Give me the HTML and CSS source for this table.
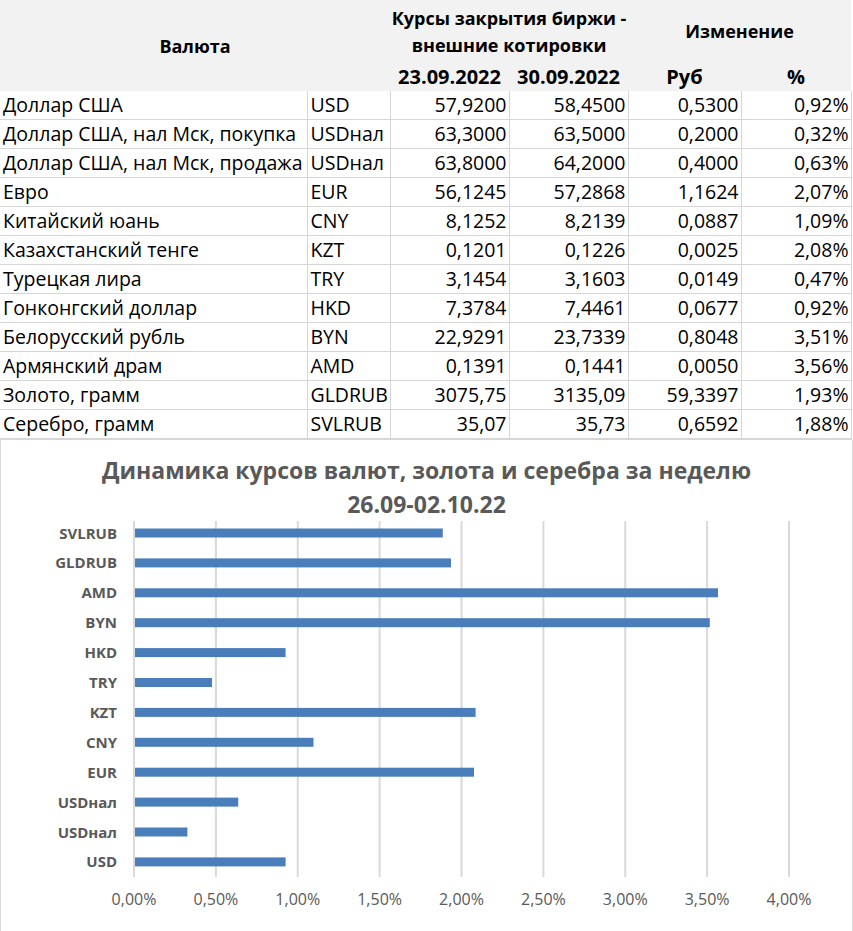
FILE: index.html
```html
<!DOCTYPE html>
<html lang="ru">
<head>
<meta charset="utf-8">
<title>Курсы валют</title>
<link rel="stylesheet" href="styles.css">
</head>
<body>
<table class="rates">
  <colgroup>
    <col class="c-name"><col class="c-code"><col class="c-num"><col class="c-num"><col class="c-rub"><col class="c-pct">
  </colgroup>
  <thead>
    <tr class="h-top">
      <th rowspan="2" colspan="2">Валюта</th>
      <th colspan="2" class="two-line">Курсы закрытия биржи -<br>внешние котировки</th>
      <th colspan="2">Изменение</th>
    </tr>
    <tr class="h-sub">
      <th>23.09.2022</th><th>30.09.2022</th><th>Руб</th><th>%</th>
    </tr>
  </thead>
  <tbody>
    <tr><td>Доллар США</td><td>USD</td><td class="n">57,9200</td><td class="n">58,4500</td><td class="n">0,5300</td><td class="n">0,92%</td></tr>
    <tr><td>Доллар США, нал Мск, покупка</td><td>USDнал</td><td class="n">63,3000</td><td class="n">63,5000</td><td class="n">0,2000</td><td class="n">0,32%</td></tr>
    <tr><td>Доллар США, нал Мск, продажа</td><td>USDнал</td><td class="n">63,8000</td><td class="n">64,2000</td><td class="n">0,4000</td><td class="n">0,63%</td></tr>
    <tr><td>Евро</td><td>EUR</td><td class="n">56,1245</td><td class="n">57,2868</td><td class="n">1,1624</td><td class="n">2,07%</td></tr>
    <tr><td>Китайский юань</td><td>CNY</td><td class="n">8,1252</td><td class="n">8,2139</td><td class="n">0,0887</td><td class="n">1,09%</td></tr>
    <tr><td>Казахстанский тенге</td><td>KZT</td><td class="n">0,1201</td><td class="n">0,1226</td><td class="n">0,0025</td><td class="n">2,08%</td></tr>
    <tr><td>Турецкая лира</td><td>TRY</td><td class="n">3,1454</td><td class="n">3,1603</td><td class="n">0,0149</td><td class="n">0,47%</td></tr>
    <tr><td>Гонконгский доллар</td><td>HKD</td><td class="n">7,3784</td><td class="n">7,4461</td><td class="n">0,0677</td><td class="n">0,92%</td></tr>
    <tr><td>Белорусский рубль</td><td>BYN</td><td class="n">22,9291</td><td class="n">23,7339</td><td class="n">0,8048</td><td class="n">3,51%</td></tr>
    <tr><td>Армянский драм</td><td>AMD</td><td class="n">0,1391</td><td class="n">0,1441</td><td class="n">0,0050</td><td class="n">3,56%</td></tr>
    <tr><td>Золото, грамм</td><td>GLDRUB</td><td class="n">3075,75</td><td class="n">3135,09</td><td class="n">59,3397</td><td class="n">1,93%</td></tr>
    <tr><td>Серебро, грамм</td><td>SVLRUB</td><td class="n">35,07</td><td class="n">35,73</td><td class="n">0,6592</td><td class="n">1,88%</td></tr>
  </tbody>
</table>

<div class="chart">
  <div class="chart-title">Динамика курсов валют, золота и серебра за неделю<br>26.09-02.10.22</div>
  <svg class="plot" width="851" height="420" viewBox="0 0 851 420">
    <g class="grid">
      <line x1="133" y1="0" x2="133" y2="356"/>
      <line x1="214.9" y1="0" x2="214.9" y2="356"/>
      <line x1="296.75" y1="0" x2="296.75" y2="356"/>
      <line x1="378.6" y1="0" x2="378.6" y2="356"/>
      <line x1="460.5" y1="0" x2="460.5" y2="356"/>
      <line x1="542.4" y1="0" x2="542.4" y2="356"/>
      <line x1="624.25" y1="0" x2="624.25" y2="356"/>
      <line x1="706.1" y1="0" x2="706.1" y2="356"/>
      <line x1="788" y1="0" x2="788" y2="356"/>
    </g>
    <g class="bars">
      <rect x="134" y="7.5" width="307.8" height="9"/>
      <rect x="134" y="37.4" width="316.0" height="9"/>
      <rect x="134" y="67.3" width="583.0" height="9"/>
      <rect x="134" y="97.2" width="574.8" height="9"/>
      <rect x="134" y="127.1" width="150.6" height="9"/>
      <rect x="134" y="157.0" width="77.0" height="9"/>
      <rect x="134" y="186.9" width="340.6" height="9"/>
      <rect x="134" y="216.8" width="178.5" height="9"/>
      <rect x="134" y="246.7" width="339.0" height="9"/>
      <rect x="134" y="276.6" width="103.2" height="9"/>
      <rect x="134" y="306.5" width="52.4" height="9"/>
      <rect x="134" y="336.4" width="150.6" height="9"/>
    </g>
    <g class="cat">
      <text x="116" y="17.5">SVLRUB</text>
      <text x="116" y="47.4">GLDRUB</text>
      <text x="116" y="77.3">AMD</text>
      <text x="116" y="107.2">BYN</text>
      <text x="116" y="137.1">HKD</text>
      <text x="116" y="167">TRY</text>
      <text x="116" y="196.9">KZT</text>
      <text x="116" y="226.8">CNY</text>
      <text x="116" y="256.7">EUR</text>
      <text x="116" y="286.6">USDнал</text>
      <text x="116" y="316.5">USDнал</text>
      <text x="116" y="346.4">USD</text>
    </g>
    <g class="ax">
      <text x="133" y="384">0,00%</text>
      <text x="214.9" y="384">0,50%</text>
      <text x="296.75" y="384">1,00%</text>
      <text x="378.6" y="384">1,50%</text>
      <text x="460.5" y="384">2,00%</text>
      <text x="542.4" y="384">2,50%</text>
      <text x="624.25" y="384">3,00%</text>
      <text x="706.1" y="384">3,50%</text>
      <text x="788" y="384">4,00%</text>
    </g>
  </svg>
</div>
</body>
</html>
```

FILE: styles.css
```css
html, body {
  margin: 0;
  padding: 0;
  background: #ffffff;
}

body {
  width: 853px;
  font-family: "Open Sans", "Noto Sans", "DejaVu Sans", sans-serif;
  color: #000000;
}

.rates {
  border-collapse: collapse;
  table-layout: fixed;
  width: 851px;
  font-size: 19.5px;
}

.c-name { width: 307px; }
.c-code { width: 83px; }
.c-num { width: 119px; }
.c-rub { width: 113px; }
.c-pct { width: 110px; }

.rates thead th {
  box-sizing: border-box;
  background: #f2f2f2;
  font-weight: 700;
  font-size: 18px;
  text-align: center;
  vertical-align: middle;
  padding: 0;
  border: none;
  white-space: nowrap;
}

.rates thead .h-top th { height: 61px; }
.rates thead .h-top th.two-line { line-height: 27px; padding-top: 2px; }
.rates thead .h-sub th { height: 30px; padding-top: 1px; font-size: 20px; line-height: 27px; }

.rates tbody td {
  height: 28px;
  padding: 0 2px 0 3px;
  border: 1px solid #d6d6d6;
  border-top: none;
  white-space: nowrap;
  overflow: hidden;
  line-height: 28px;
}

.rates tbody td:first-child { border-left: none; }
.rates tbody td.n { text-align: right; }
.rates tbody tr:last-child td { border-bottom: 2px solid #d6d6d6; }

.chart {
  width: 851px;
  border-left: 1px solid #d9d9d9;
  border-right: 1px solid #d9d9d9;
  border-bottom: 1px solid #d9d9d9;
}

.chart-title {
  padding-top: 13px;
  text-align: center;
  font-size: 23px;
  font-weight: 700;
  line-height: 34px;
  color: #595959;
}

.plot { display: block; }

.grid line {
  stroke: #d9d9d9;
  stroke-width: 2;
}

.bars rect { fill: #4a7ebb; }

.cat text {
  font-family: "Open Sans", "Noto Sans", sans-serif;
  font-size: 15px;
  font-weight: 700;
  fill: #595959;
  text-anchor: end;
}

.ax text {
  font-family: "Open Sans", "Noto Sans", sans-serif;
  font-size: 16px;
  fill: #595959;
  text-anchor: middle;
}
```
